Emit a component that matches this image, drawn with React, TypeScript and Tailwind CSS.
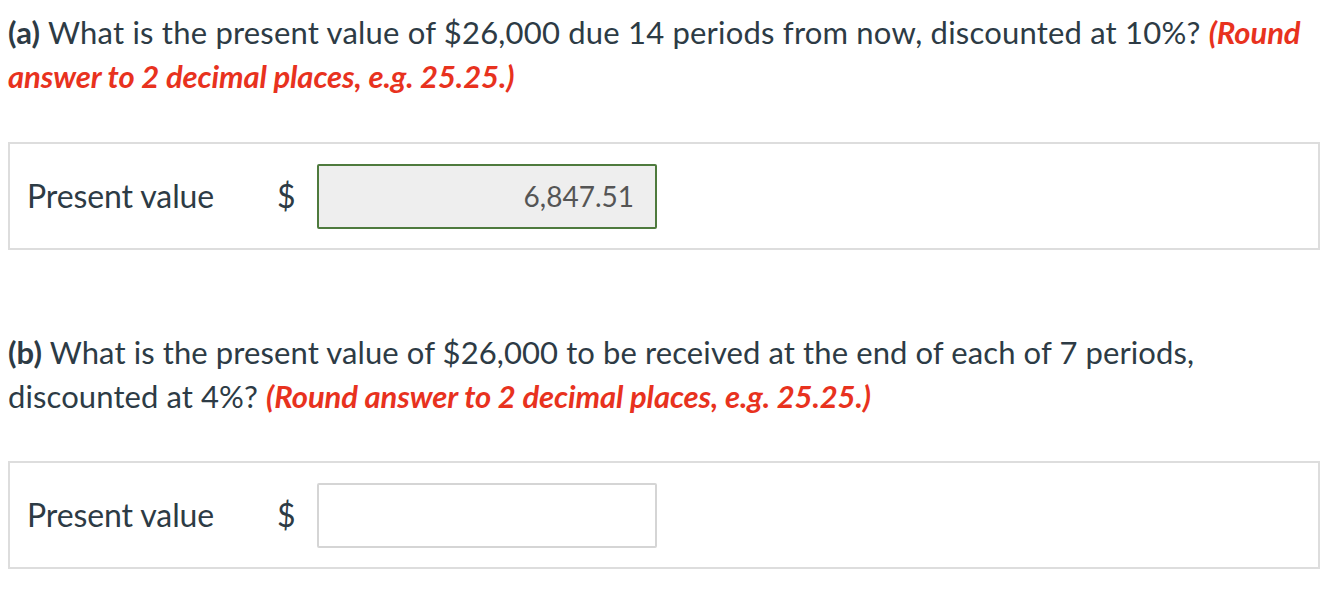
import React from 'react'

const font = { fontFamily: 'Lato, "Open Sans", sans-serif' }

function AnswerBox({ value }: { value?: string }) {
  return (
    <div className="mr-[2px] flex h-[108px] items-center border-2 border-[#dddddd] bg-white pl-[17px]">
      <span className="w-[250px] text-[32px] tracking-[-0.1px] text-[#2d3b45]">Present value</span>
      <span className="w-[40px] text-[32px] text-[#2d3b45]">$</span>
      {value !== undefined ? (
        <div className="flex h-[65px] w-[340px] items-center justify-end rounded-[2px] border-2 border-[#4e7a3d] bg-[#eeeeee] pr-[21px] text-[28px] text-[#555555]">
          {value}
        </div>
      ) : (
        <div className="h-[65px] w-[340px] rounded-[2px] border-2 border-[#d5d5d5] bg-white" />
      )}
    </div>
  )
}

export default function App() {
  return (
    <div className="min-h-screen bg-white pl-[8px] pt-[10px]" style={font}>
      <p className="text-[31px] leading-[44px] tracking-[0.2px] text-[#2d3b45]">
        <strong className="font-bold">(a)</strong> What is the present value of $26,000 due 14 periods from now, discounted at 10%?{' '}
        <em className="font-bold tracking-[-0.1px] text-[#e8321e]">(Round answer to 2 decimal places, e.g. 25.25.)</em>
      </p>
      <div className="mt-[44px]">
        <AnswerBox value="6,847.51" />
      </div>

      <p className="mt-[80px] text-[31px] leading-[44px] tracking-[0.1px] text-[#2d3b45]">
        <strong className="font-bold">(b)</strong> What is the present value of $26,000 to be received at the end of each of 7 periods,
        <br />
        discounted at 4%?{' '}
        <em className="font-bold tracking-[-0.1px] text-[#e8321e]">(Round answer to 2 decimal places, e.g. 25.25.)</em>
      </p>
      <div className="mt-[43px]">
        <AnswerBox />
      </div>
    </div>
  )
}
